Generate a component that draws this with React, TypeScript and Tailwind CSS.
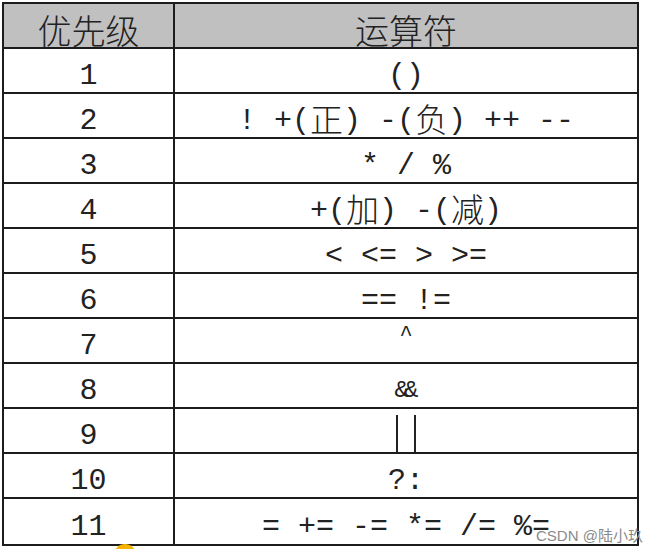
import React from "react";

const ROWS: [string, string][] = [
  ["1", "()"],
  ["2", "! +(正) -(负) ++ --"],
  ["3", "* / %"],
  ["4", "+(加) -(减)"],
  ["5", "< <= > >="],
  ["6", "== !="],
  ["7", "^"],
  ["8", "&&"],
  ["9", "||"],
  ["10", "?:"],
  ["11", "= += -= *= /= %="],
];

// wrap CJK chars so they render full width next to the mono ascii
function Mixed({ text }: { text: string }) {
  return (
    <>
      {Array.from(text).map((ch, i) =>
        /[\u4e00-\u9fff]/.test(ch) ? (
          <span key={i} className="text-[33px] font-light -mt-[4px] [font-family:'Noto_Sans_CJK_SC',sans-serif]">
            {ch}
          </span>
        ) : (
          <span key={i} className="whitespace-pre">{ch}</span>
        )
      )}
    </>
  );
}

function OpCell({ op }: { op: string }) {
  if (op === "^") return <span className="text-[22px] -mt-[20px]">^</span>;
  if (op === "&&") return <span className="text-[24px] tracking-[-5px] -ml-[4px]">&amp;&amp;</span>;
  if (op === "||")
    return (
      <span className="flex gap-[16px] self-stretch -mt-[4px]">
        <span className="w-[2px] bg-[#222]" />
        <span className="w-[2px] bg-[#222]" />
      </span>
    );
  return <Mixed text={op} />;
}

export default function App() {
  return (
    <div className="relative h-[549px] w-[651px] overflow-hidden bg-white text-[#222] [font-family:'Liberation_Mono','Noto_Sans_CJK_SC',monospace]">
      <div className="ml-[2px] mt-[2px] w-[637px] border-2 border-[#1c1c1c]">
        <div className="grid grid-cols-[171px_1fr] h-[45px] border-b-2 border-[#1c1c1c] bg-[#c0c0c0]">
          <div className="flex items-center justify-center border-r-2 border-[#1c1c1c] text-[34px] font-light [font-family:'Noto_Sans_CJK_SC',sans-serif]">
            优先级
          </div>
          <div className="flex items-center justify-center text-[34px] font-light [font-family:'Noto_Sans_CJK_SC',sans-serif]">
            运算符
          </div>
        </div>
        {ROWS.map(([lvl, op], i) => (
          <div
            key={lvl}
            className={`grid grid-cols-[171px_1fr] h-[45px] ${i < ROWS.length - 1 ? "border-b-2 border-[#1c1c1c]" : ""}`}
          >
            <div className="flex items-center justify-center border-r-2 border-[#1c1c1c] pt-[10px] text-[30px] leading-none">
              {lvl}
            </div>
            <div className="flex items-center justify-center pt-[10px] text-[30px] leading-none">
              <OpCell op={op} />
            </div>
          </div>
        ))}
      </div>

      <div className="absolute left-[536px] top-[525px] text-[15px] text-[#8a8a8a] [font-family:'Liberation_Sans','Noto_Sans_CJK_SC',sans-serif]">
        CSDN @陆小玖
      </div>
      <div className="absolute left-[114px] top-[544px] h-[22px] w-[22px] rounded-full bg-[#f6b400]" />
    </div>
  );
}
